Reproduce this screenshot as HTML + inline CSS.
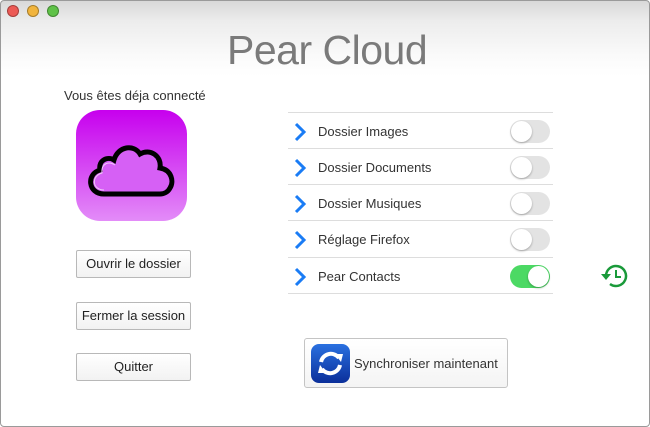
<!DOCTYPE html><html><head><style>
*{margin:0;padding:0;box-sizing:border-box}
body{width:650px;height:427px;overflow:hidden;font-family:"Liberation Sans",sans-serif;background:#fff;position:relative}
.win{position:absolute;left:0;top:0;width:650px;height:427px;border:1px solid #9a9a9a;border-radius:4px;background:linear-gradient(#d8d8d8 0,#ececec 20px,#fafafa 55px,#fff 75px)}
.dot{position:absolute;top:4px;width:12px;height:12px;border-radius:50%;border:1px solid rgba(0,0,0,.3)}
.t{position:absolute;font-size:13px;color:#333}
.btn{position:absolute;left:75px;width:115px;height:28px;border:1px solid #b8b8b8;border-radius:2px;background:linear-gradient(#fff,#f2f2f2);font-size:13px;color:#222;text-align:center;line-height:26px}
.line{position:absolute;left:287px;width:265px;height:1px;background:#ddd}
.row{position:absolute;left:287px;width:265px;height:36px}
.row .ch{position:absolute;left:5px;top:9px}
.row span{position:absolute;left:30px;top:11px;font-size:13px;color:#333}
.tg{position:absolute;left:222px;top:7px;width:40px;height:23px;border-radius:12px;background:#e3e3e3}
.tg i{position:absolute;left:1px;top:1px;width:21px;height:21px;border-radius:50%;background:#fff;box-shadow:0 1px 2px rgba(0,0,0,.3)}
.tg.on{background:#4cd964}.tg.on i{left:18px}
</style></head><body><div class="win">
<div class="dot" style="left:6px;background:#ec5a55"></div>
<div class="dot" style="left:26px;background:#f1b43c"></div>
<div class="dot" style="left:46px;background:#5fc248"></div>
<div style="position:absolute;left:226px;top:26px;font-size:41px;color:#7a7a7a;letter-spacing:-0.5px">Pear Cloud</div>
<div class="t" style="left:63px;top:87px">Vous êtes déja connecté</div>
<div style="position:absolute;left:75px;top:109px;width:111px;height:111px;border-radius:24px;background:linear-gradient(#c700ee,#e38cf8)">
<svg width="111" height="111" viewBox="0 0 111 111"><path d="M28 84 C12 84 10 64 24 60 C22 50 32 46 38 50 C42 36 58 34 64 44 C74 38 86 46 84 58 C96 60 98 72 94 78 C92 82 88 84 84 84 Z" fill="#d660f5" stroke="#000" stroke-width="5"/><path d="M28 80 C16 80 15 66 26 63 C25 53 33 51 39 55" fill="none" stroke="#f0c8fa" stroke-width="1"/></svg></div>
<div class="btn" style="top:249px">Ouvrir le dossier</div>
<div class="btn" style="top:301px">Fermer la session</div>
<div class="btn" style="top:352px">Quitter</div>
<div class="line" style="top:111px"></div><div class="line" style="top:147px"></div><div class="line" style="top:183px"></div><div class="line" style="top:219px"></div><div class="line" style="top:256px"></div><div class="line" style="top:292px"></div>
<div class="row" style="top:112px"><svg class="ch" width="14" height="20"><path d="M3 2l8 8-8 8" stroke="#1a7cf5" stroke-width="3" fill="none"/></svg><span>Dossier Images</span><div class="tg"><i></i></div></div>
<div class="row" style="top:148px"><svg class="ch" width="14" height="20"><path d="M3 2l8 8-8 8" stroke="#1a7cf5" stroke-width="3" fill="none"/></svg><span>Dossier Documents</span><div class="tg"><i></i></div></div>
<div class="row" style="top:184px"><svg class="ch" width="14" height="20"><path d="M3 2l8 8-8 8" stroke="#1a7cf5" stroke-width="3" fill="none"/></svg><span>Dossier Musiques</span><div class="tg"><i></i></div></div>
<div class="row" style="top:220px"><svg class="ch" width="14" height="20"><path d="M3 2l8 8-8 8" stroke="#1a7cf5" stroke-width="3" fill="none"/></svg><span>Réglage Firefox</span><div class="tg"><i></i></div></div>
<div class="row" style="top:257px"><svg class="ch" width="14" height="20"><path d="M3 2l8 8-8 8" stroke="#1a7cf5" stroke-width="3" fill="none"/></svg><span>Pear Contacts</span><div class="tg on"><i></i></div></div>
<svg style="position:absolute;left:597px;top:261px" width="32" height="28" viewBox="0 0 32 28"><path d="M8 14 A10 10 0 1 1 12 22" fill="none" stroke="#1a9a3a" stroke-width="2.5"/><path d="M3 12 L8 18 L13 12Z" fill="#1a9a3a"/><path d="M18 8v7h5" stroke="#1a9a3a" stroke-width="2" fill="none"/></svg>
<div style="position:absolute;left:303px;top:337px;width:204px;height:50px;border:1px solid #c4c4c4;border-radius:3px;background:linear-gradient(#fff,#f4f4f4)">
<div style="position:absolute;left:6px;top:5px;width:39px;height:39px;border-radius:8px;background:linear-gradient(#2a70e0,#0b2f9a)">
<svg width="39" height="39" viewBox="0 0 39 39"><path d="M10 18 A10 10 0 0 1 28 14" fill="none" stroke="#fff" stroke-width="4"/><path d="M24 10l8 0 -2 8z" fill="#fff"/><path d="M29 21 A10 10 0 0 1 11 25" fill="none" stroke="#fff" stroke-width="4"/><path d="M15 29l-8 0 2-8z" fill="#fff"/></svg></div>
<div style="position:absolute;left:49px;top:17px;font-size:13px;color:#333">Synchroniser maintenant</div></div>
</div></body></html>
